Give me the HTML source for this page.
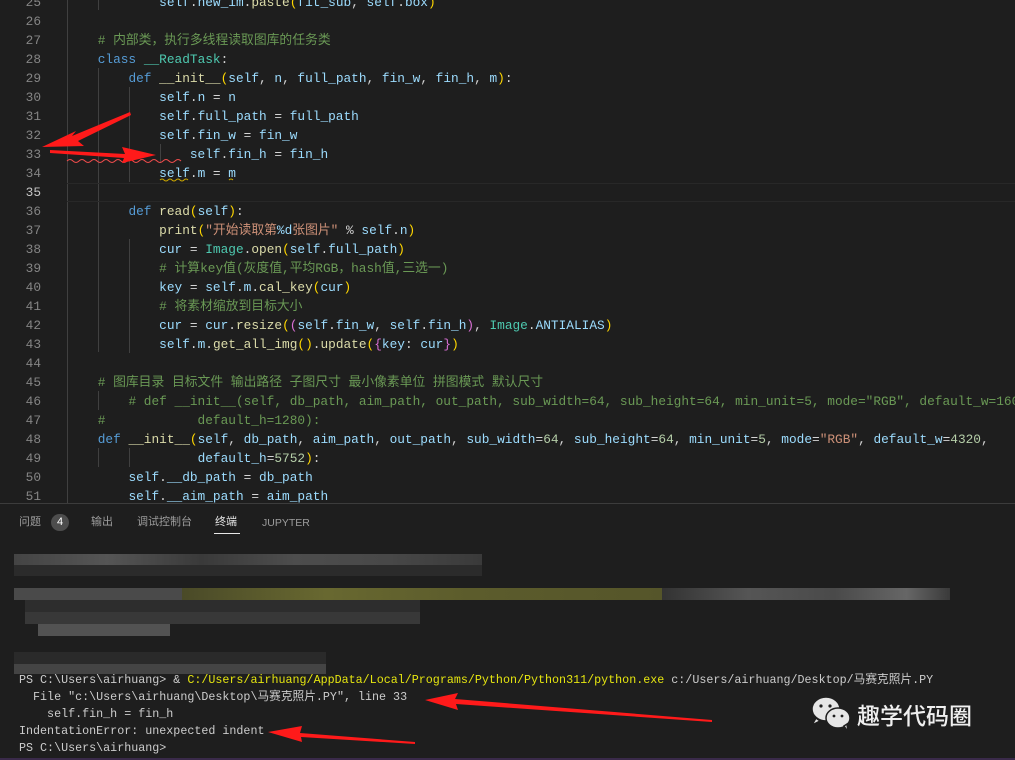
<!DOCTYPE html>
<html><head><meta charset="utf-8"><style>
body{margin:0;width:1015px;height:760px;background:#1e1e1e;overflow:hidden;position:relative;font-family:"Liberation Mono","Noto Sans CJK SC",monospace}
.ed{position:absolute;left:0;top:0;width:1015px;height:503px;overflow:hidden;background:#1e1e1e}
.l{position:absolute;left:0;height:19px;line-height:19px;font-size:12.8px;white-space:pre;width:1015px}
.n{position:absolute;left:0;width:41px;text-align:right;color:#858585}
.c{position:absolute;left:67px;color:#d4d4d4}
.k{color:#569cd6}.t{color:#4ec9b0}.v{color:#9cdcfe}.f{color:#dcdcaa}.s{color:#ce9178}.g{color:#6a9955}.nu{color:#b5cea8}
.y{color:#ffd700}.p{color:#da70d6}.b{color:#179fff}
.gd{position:absolute;width:1px;background:#404040}
.term{position:absolute;left:19px;font-size:11.7px;line-height:17px;white-space:pre;color:#cccccc}
.tab{position:absolute;top:514px;height:17px;line-height:17px;font-family:"Liberation Sans","Noto Sans CJK SC",sans-serif;font-size:11px;color:#9d9d9d}
.bl{position:absolute}
</style></head><body>
<div class="ed">
<div class="gd" style="left:67px;top:0;height:503px"></div>
<div class="gd" style="left:98px;top:0;height:10px"></div>
<div class="gd" style="left:98px;top:68px;height:284px"></div>
<div class="gd" style="left:129px;top:87px;height:95px"></div>
<div class="gd" style="left:129px;top:239px;height:114px"></div>
<div class="gd" style="left:98px;top:391px;height:19px"></div>
<div class="gd" style="left:98px;top:448px;height:19px"></div>
<div class="gd" style="left:129px;top:448px;height:19px"></div>
<div class="gd" style="left:160px;top:144px;height:19px"></div>
<div style="position:absolute;left:67px;top:183px;width:948px;height:17px;border-top:1px solid #282828;border-bottom:1px solid #282828"></div>

<div class="l" style="top:-7.5px"><span class="n">25</span><span class="c">            <span class="v">self</span>.<span class="v">new_im</span>.<span class="f">paste</span><span class="y">(</span><span class="v">fit_sub</span>, <span class="v">self</span>.<span class="v">box</span><span class="y">)</span></span></div>
<div class="l" style="top:11.5px"><span class="n">26</span></div>
<div class="l" style="top:30.5px"><span class="n">27</span><span class="c">    <span class="g"># 内部类，执行多线程读取图库的任务类</span></span></div>
<div class="l" style="top:49.5px"><span class="n">28</span><span class="c">    <span class="k">class</span> <span class="t">__ReadTask</span>:</span></div>
<div class="l" style="top:68.5px"><span class="n">29</span><span class="c">        <span class="k">def</span> <span class="f">__init__</span><span class="y">(</span><span class="v">self</span>, <span class="v">n</span>, <span class="v">full_path</span>, <span class="v">fin_w</span>, <span class="v">fin_h</span>, <span class="v">m</span><span class="y">)</span>:</span></div>
<div class="l" style="top:87.5px"><span class="n">30</span><span class="c">            <span class="v">self</span>.<span class="v">n</span> = <span class="v">n</span></span></div>
<div class="l" style="top:106.5px"><span class="n">31</span><span class="c">            <span class="v">self</span>.<span class="v">full_path</span> = <span class="v">full_path</span></span></div>
<div class="l" style="top:125.5px"><span class="n">32</span><span class="c">            <span class="v">self</span>.<span class="v">fin_w</span> = <span class="v">fin_w</span></span></div>
<div class="l" style="top:144.5px"><span class="n">33</span><span class="c">                <span class="v">self</span>.<span class="v">fin_h</span> = <span class="v">fin_h</span></span></div>
<div class="l" style="top:163.5px"><span class="n">34</span><span class="c">            <span class="v">self</span>.<span class="v">m</span> = <span class="v">m</span></span></div>
<div class="l" style="top:182.5px"><span class="n" style="color:#c6c6c6">35</span></div>
<div class="l" style="top:201.5px"><span class="n">36</span><span class="c">        <span class="k">def</span> <span class="f">read</span><span class="y">(</span><span class="v">self</span><span class="y">)</span>:</span></div>
<div class="l" style="top:220.5px"><span class="n">37</span><span class="c">            <span class="f">print</span><span class="y">(</span><span class="s">"开始读取第<span class="v">%d</span>张图片"</span> % <span class="v">self</span>.<span class="v">n</span><span class="y">)</span></span></div>
<div class="l" style="top:239.5px"><span class="n">38</span><span class="c">            <span class="v">cur</span> = <span class="t">Image</span>.<span class="f">open</span><span class="y">(</span><span class="v">self</span>.<span class="v">full_path</span><span class="y">)</span></span></div>
<div class="l" style="top:258.5px"><span class="n">39</span><span class="c">            <span class="g"># 计算key值(灰度值,平均RGB，hash值,三选一)</span></span></div>
<div class="l" style="top:277.5px"><span class="n">40</span><span class="c">            <span class="v">key</span> = <span class="v">self</span>.<span class="v">m</span>.<span class="f">cal_key</span><span class="y">(</span><span class="v">cur</span><span class="y">)</span></span></div>
<div class="l" style="top:296.5px"><span class="n">41</span><span class="c">            <span class="g"># 将素材缩放到目标大小</span></span></div>
<div class="l" style="top:315.5px"><span class="n">42</span><span class="c">            <span class="v">cur</span> = <span class="v">cur</span>.<span class="f">resize</span><span class="y">(</span><span class="p">(</span><span class="v">self</span>.<span class="v">fin_w</span>, <span class="v">self</span>.<span class="v">fin_h</span><span class="p">)</span>, <span class="t">Image</span>.<span class="v">ANTIALIAS</span><span class="y">)</span></span></div>
<div class="l" style="top:334.5px"><span class="n">43</span><span class="c">            <span class="v">self</span>.<span class="v">m</span>.<span class="f">get_all_img</span><span class="y">()</span>.<span class="f">update</span><span class="y">(</span><span class="p">{</span><span class="v">key</span>: <span class="v">cur</span><span class="p">}</span><span class="y">)</span></span></div>
<div class="l" style="top:353.5px"><span class="n">44</span></div>
<div class="l" style="top:372.5px"><span class="n">45</span><span class="c">    <span class="g"># 图库目录 目标文件 输出路径 子图尺寸 最小像素单位 拼图模式 默认尺寸</span></span></div>
<div class="l" style="top:391.5px"><span class="n">46</span><span class="c">        <span class="g"># def __init__(self, db_path, aim_path, out_path, sub_width=64, sub_height=64, min_unit=5, mode="RGB", default_w=1600,</span></span></div>
<div class="l" style="top:410.5px"><span class="n">47</span><span class="c">    <span class="g">#            default_h=1280):</span></span></div>
<div class="l" style="top:429.5px"><span class="n">48</span><span class="c">    <span class="k">def</span> <span class="f">__init__</span><span class="y">(</span><span class="v">self</span>, <span class="v">db_path</span>, <span class="v">aim_path</span>, <span class="v">out_path</span>, <span class="v">sub_width</span>=<span class="nu">64</span>, <span class="v">sub_height</span>=<span class="nu">64</span>, <span class="v">min_unit</span>=<span class="nu">5</span>, <span class="v">mode</span>=<span class="s">"RGB"</span>, <span class="v">default_w</span>=<span class="nu">4320</span>,</span></div>
<div class="l" style="top:448.5px"><span class="n">49</span><span class="c">                 <span class="v">default_h</span>=<span class="nu">5752</span><span class="y">)</span>:</span></div>
<div class="l" style="top:467.5px"><span class="n">50</span><span class="c">        <span class="v">self</span>.<span class="v">__db_path</span> = <span class="v">db_path</span></span></div>
<div class="l" style="top:486.5px"><span class="n">51</span><span class="c">        <span class="v">self</span>.<span class="v">__aim_path</span> = <span class="v">aim_path</span></span></div>
<svg style="position:absolute;left:0;top:0" width="1015" height="503">
<path d="M67 161 q3 -3 6 0 t6 0 t6 0 t6 0 t6 0 t6 0 t6 0 t6 0 t6 0 t6 0 t6 0 t6 0 t6 0 t6 0 t6 0 t6 0 t6 0 t6 0 t6 0" stroke="#f14c4c" fill="none" stroke-width="1"/>
<path d="M160 180 q2 -2 4 0 t4 0 t4 0 t4 0 t4 0 t4 0 t4 0 M229 180 q2 -2 4 0" stroke="#cca700" fill="none" stroke-width="1"/>
</svg>
</div>
<div style="position:absolute;left:0;top:503px;width:1015px;height:1px;background:#3c3c3c"></div>

<div class="tab" style="left:19px">问题</div>
<div style="position:absolute;left:51px;top:514px;width:18px;height:17px;border-radius:9px;background:#4d4d4d;color:#fff;font-family:'Liberation Sans',sans-serif;font-size:11px;text-align:center;line-height:17px">4</div>
<div class="tab" style="left:91px">输出</div>
<div class="tab" style="left:137px">调试控制台</div>
<div class="tab" style="left:215px;color:#e7e7e7">终端</div>
<div style="position:absolute;left:214px;top:533px;width:26px;height:1px;background:#e7e7e7"></div>
<div class="tab" style="left:262px;top:515px;font-size:10.5px">JUPYTER</div>

<div class="bl" style="left:14px;top:554px;width:468px;height:11px;background:linear-gradient(90deg,#444,#555 20%,#3a3a3a 40%,#4d4d4d 60%,#484848 80%,#3a3a3a)"></div>
<div class="bl" style="left:14px;top:565px;width:468px;height:11px;background:#2b2b2b"></div>
<div class="bl" style="left:14px;top:588px;width:168px;height:12px;background:#4a4a4a"></div>
<div class="bl" style="left:182px;top:588px;width:480px;height:12px;background:linear-gradient(90deg,#4a4a28,#686830 30%,#5c5c2c 60%,#55552a)"></div>
<div class="bl" style="left:662px;top:588px;width:288px;height:12px;background:linear-gradient(90deg,#333,#555 30%,#4a4a4a 60%,#666 85%,#3a3a3a)"></div>
<div class="bl" style="left:25px;top:600px;width:395px;height:12px;background:#2d2d2d"></div>
<div class="bl" style="left:25px;top:612px;width:395px;height:12px;background:#383838"></div>
<div class="bl" style="left:38px;top:624px;width:132px;height:12px;background:#525252"></div>
<div class="bl" style="left:14px;top:652px;width:312px;height:12px;background:#2a2a2a"></div>
<div class="bl" style="left:14px;top:664px;width:312px;height:10px;background:#444"></div>

<div class="term" style="top:672px">PS C:\Users\airhuang&gt; &amp; <span style="color:#e5e510">C:/Users/airhuang/AppData/Local/Programs/Python/Python311/python.exe</span> c:/Users/airhuang/Desktop/马赛克照片.PY</div>
<div class="term" style="top:689px">  File "c:\Users\airhuang\Desktop\马赛克照片.PY", line 33</div>
<div class="term" style="top:706px">    self.fin_h = fin_h</div>
<div class="term" style="top:723px">IndentationError: unexpected indent</div>
<div class="term" style="top:740px">PS C:\Users\airhuang&gt;</div>

<svg style="position:absolute;left:0;top:0" width="1015" height="760">
<polygon points="130,112 72,136 76,131 42,147 84,146 78,141 131,115" fill="#ff1a1a"/>
<polygon points="50,150 125,154 122,147 156,155 122,163 124,158 50,153" fill="#ff1a1a"/>
<polygon points="712,720 455,699 458,693 425,700 458,710 456,704 712,722" fill="#ff1a1a"/>
<polygon points="415,742 300,733 302,726 268,732 302,742 301,737 415,744" fill="#ff1a1a"/>
<g fill="#e6e6e6" stroke="#1e1e1e" stroke-width="1.5">
<ellipse cx="826" cy="709" rx="14" ry="12"/>
<path d="M816 718 l-4 7 8 -4z"/>
<ellipse cx="838" cy="718" rx="12" ry="10"/>
<path d="M844 726 l4 6 -1 -8z"/>
</g>
<g fill="#1e1e1e"><circle cx="821" cy="706" r="1.6"/><circle cx="830" cy="706" r="1.6"/><circle cx="834" cy="716" r="1.4"/><circle cx="842" cy="716" r="1.4"/></g>
</svg>
<div style="position:absolute;left:857px;top:700px;font-family:'Noto Sans CJK SC',sans-serif;font-size:23px;line-height:28px;color:#f0f0f0;font-weight:500">趣学代码圈</div>
<div style="position:absolute;left:0;top:758px;width:1015px;height:2px;background:#3a2a4a"></div>
</body></html>
